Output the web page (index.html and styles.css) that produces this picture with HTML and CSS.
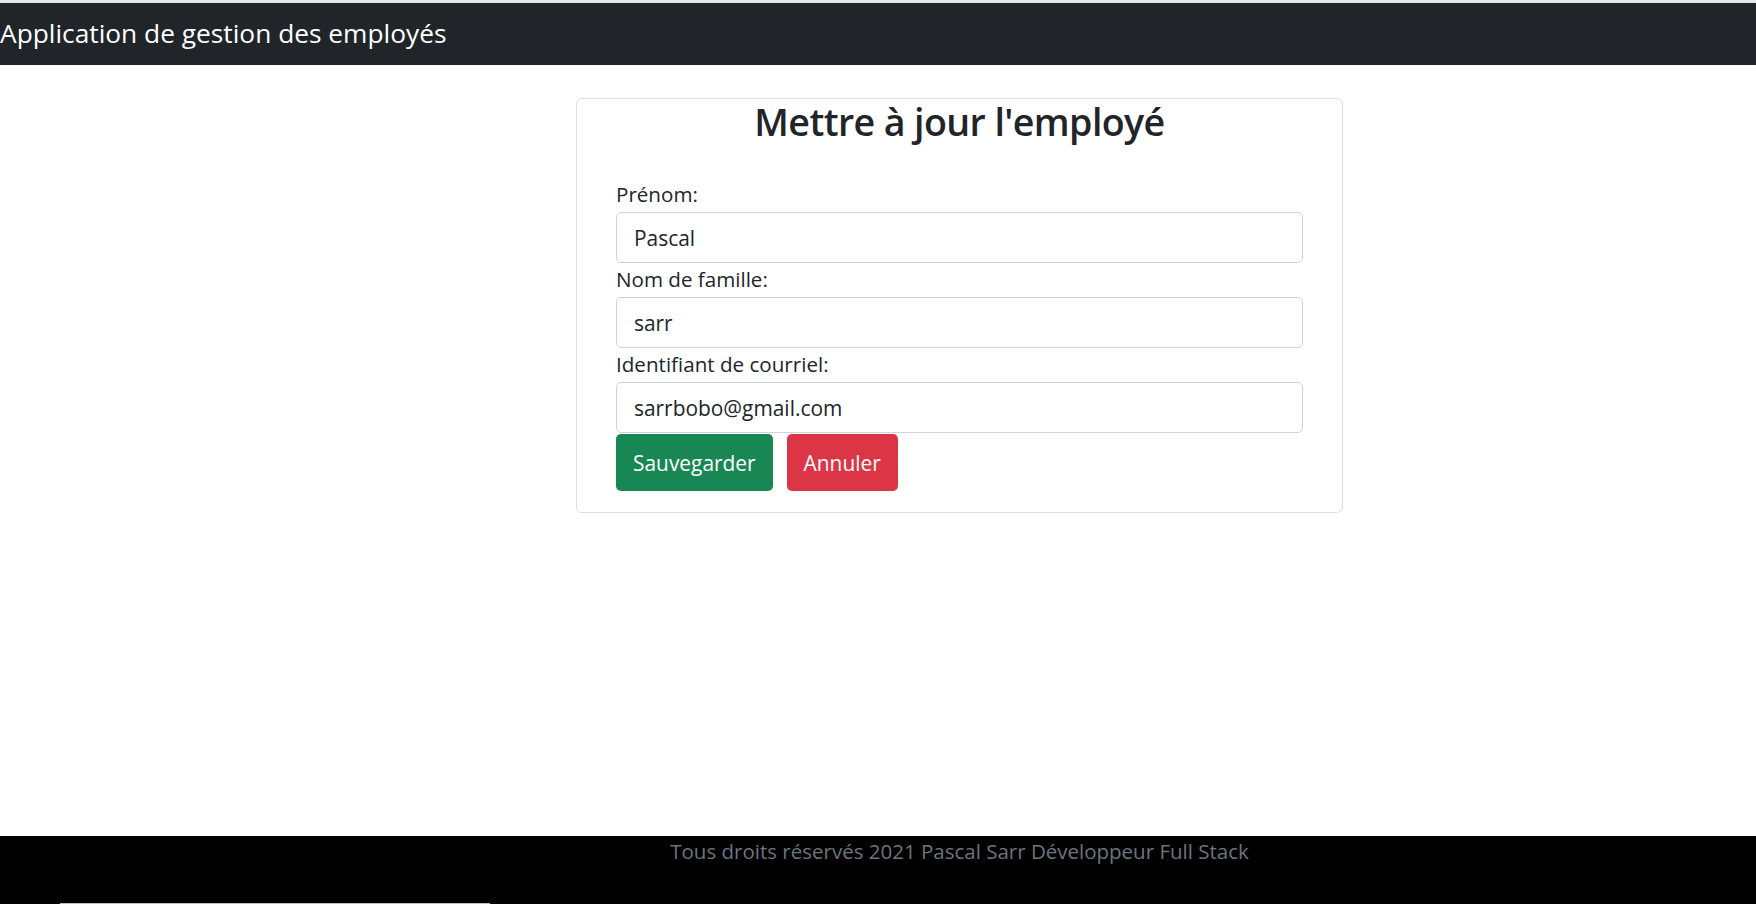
FILE: index.html
```html
<!DOCTYPE html>
<html lang="fr">
<head>
<meta charset="utf-8">
<title>Application de gestion des employés</title>
<link rel="stylesheet" href="styles.css">
</head>
<body>
<div class="topline"></div>
<header class="navbar">
  <span class="brand">Application de gestion des employés</span>
</header>
<main class="main">
  <div class="layout">
    <div class="card">
      <h3 class="card-title">Mettre à jour l'employé</h3>
      <form class="card-body">
        <div class="form-group">
          <label class="label">Prénom:</label>
          <input class="input" type="text" value="Pascal">
        </div>
        <div class="form-group">
          <label class="label">Nom de famille:</label>
          <input class="input" type="text" value="sarr">
        </div>
        <div class="form-group">
          <label class="label">Identifiant de courriel:</label>
          <input class="input" type="text" value="sarrbobo@gmail.com">
        </div>
        <div class="actions">
          <button type="button" class="btn btn-success">Sauvegarder</button>
          <button type="button" class="btn btn-danger">Annuler</button>
        </div>
      </form>
    </div>
  </div>
</main>
<footer class="footer">
  <div class="layout">
    <span class="footer-text">Tous droits réservés 2021 Pascal Sarr Développeur Full Stack</span>
  </div>
  <div class="scroll-line"></div>
</footer>
</body>
</html>
```
FILE: styles.css
```css
* { box-sizing: border-box; }

html, body {
  margin: 0;
  padding: 0;
}

body {
  height: 100vh;
  display: flex;
  flex-direction: column;
  font-family: "Open Sans", "Noto Sans", "Liberation Sans", sans-serif;
  color: #212529;
  background: #fff;
}

.topline {
  height: 3px;
  background: #e3e5e8;
  flex: none;
}

.navbar {
  height: 62px;
  flex: none;
  background: #212529;
  display: flex;
  align-items: center;
  padding-left: 0;
}

.brand {
  color: #fff;
  font-size: 26.3px;
  line-height: 36px;
  padding-bottom: 2px;
}

.main {
  flex: 1;
  padding-top: 33px;
}

.layout {
  display: grid;
  grid-template-columns: 576px 767px 1fr;
}

.layout > * {
  grid-column: 2;
}

.card {
  border: 1px solid #dcdfe2;
  border-radius: 6px;
  background: #fff;
  padding-bottom: 21px;
}

.card-title {
  margin: 0;
  text-align: center;
  font-size: 37.6px;
  line-height: 46px;
  font-weight: 600;
  letter-spacing: -0.6px;
  color: #212529;
}

.card-body {
  margin: 33px 0 0;
  padding: 0 39px;
  display: flex;
  flex-direction: column;
}

.form-group {
  display: flex;
  flex-direction: column;
}

.label {
  font-size: 20.6px;
  line-height: 33px;
  margin-bottom: 1px;
  color: #212529;
}

.input {
  height: 51px;
  border: 1px solid #ced4da;
  border-radius: 5px;
  padding: 0 17px;
  font-family: inherit;
  font-size: 20.9px;
  color: #212529;
  background: #fff;
  outline: none;
}

.actions {
  display: flex;
  gap: 14px;
  margin-top: 1px;
}

.btn {
  height: 57px;
  border: none;
  border-radius: 5px;
  padding: 0 17px;
  font-family: inherit;
  font-size: 20.9px;
  color: #fff;
  cursor: pointer;
}

.btn-success { background: #198754; }
.btn-danger { background: #dc3545; }

.footer {
  height: 68px;
  flex: none;
  background: #000;
  position: relative;
}

.footer-text {
  display: block;
  text-align: center;
  color: #6c757d;
  font-size: 20.5px;
  line-height: 30px;
}

.scroll-line {
  position: absolute;
  left: 60px;
  bottom: 0;
  width: 430px;
  height: 1px;
  background: #bdbdbd;
}
```
